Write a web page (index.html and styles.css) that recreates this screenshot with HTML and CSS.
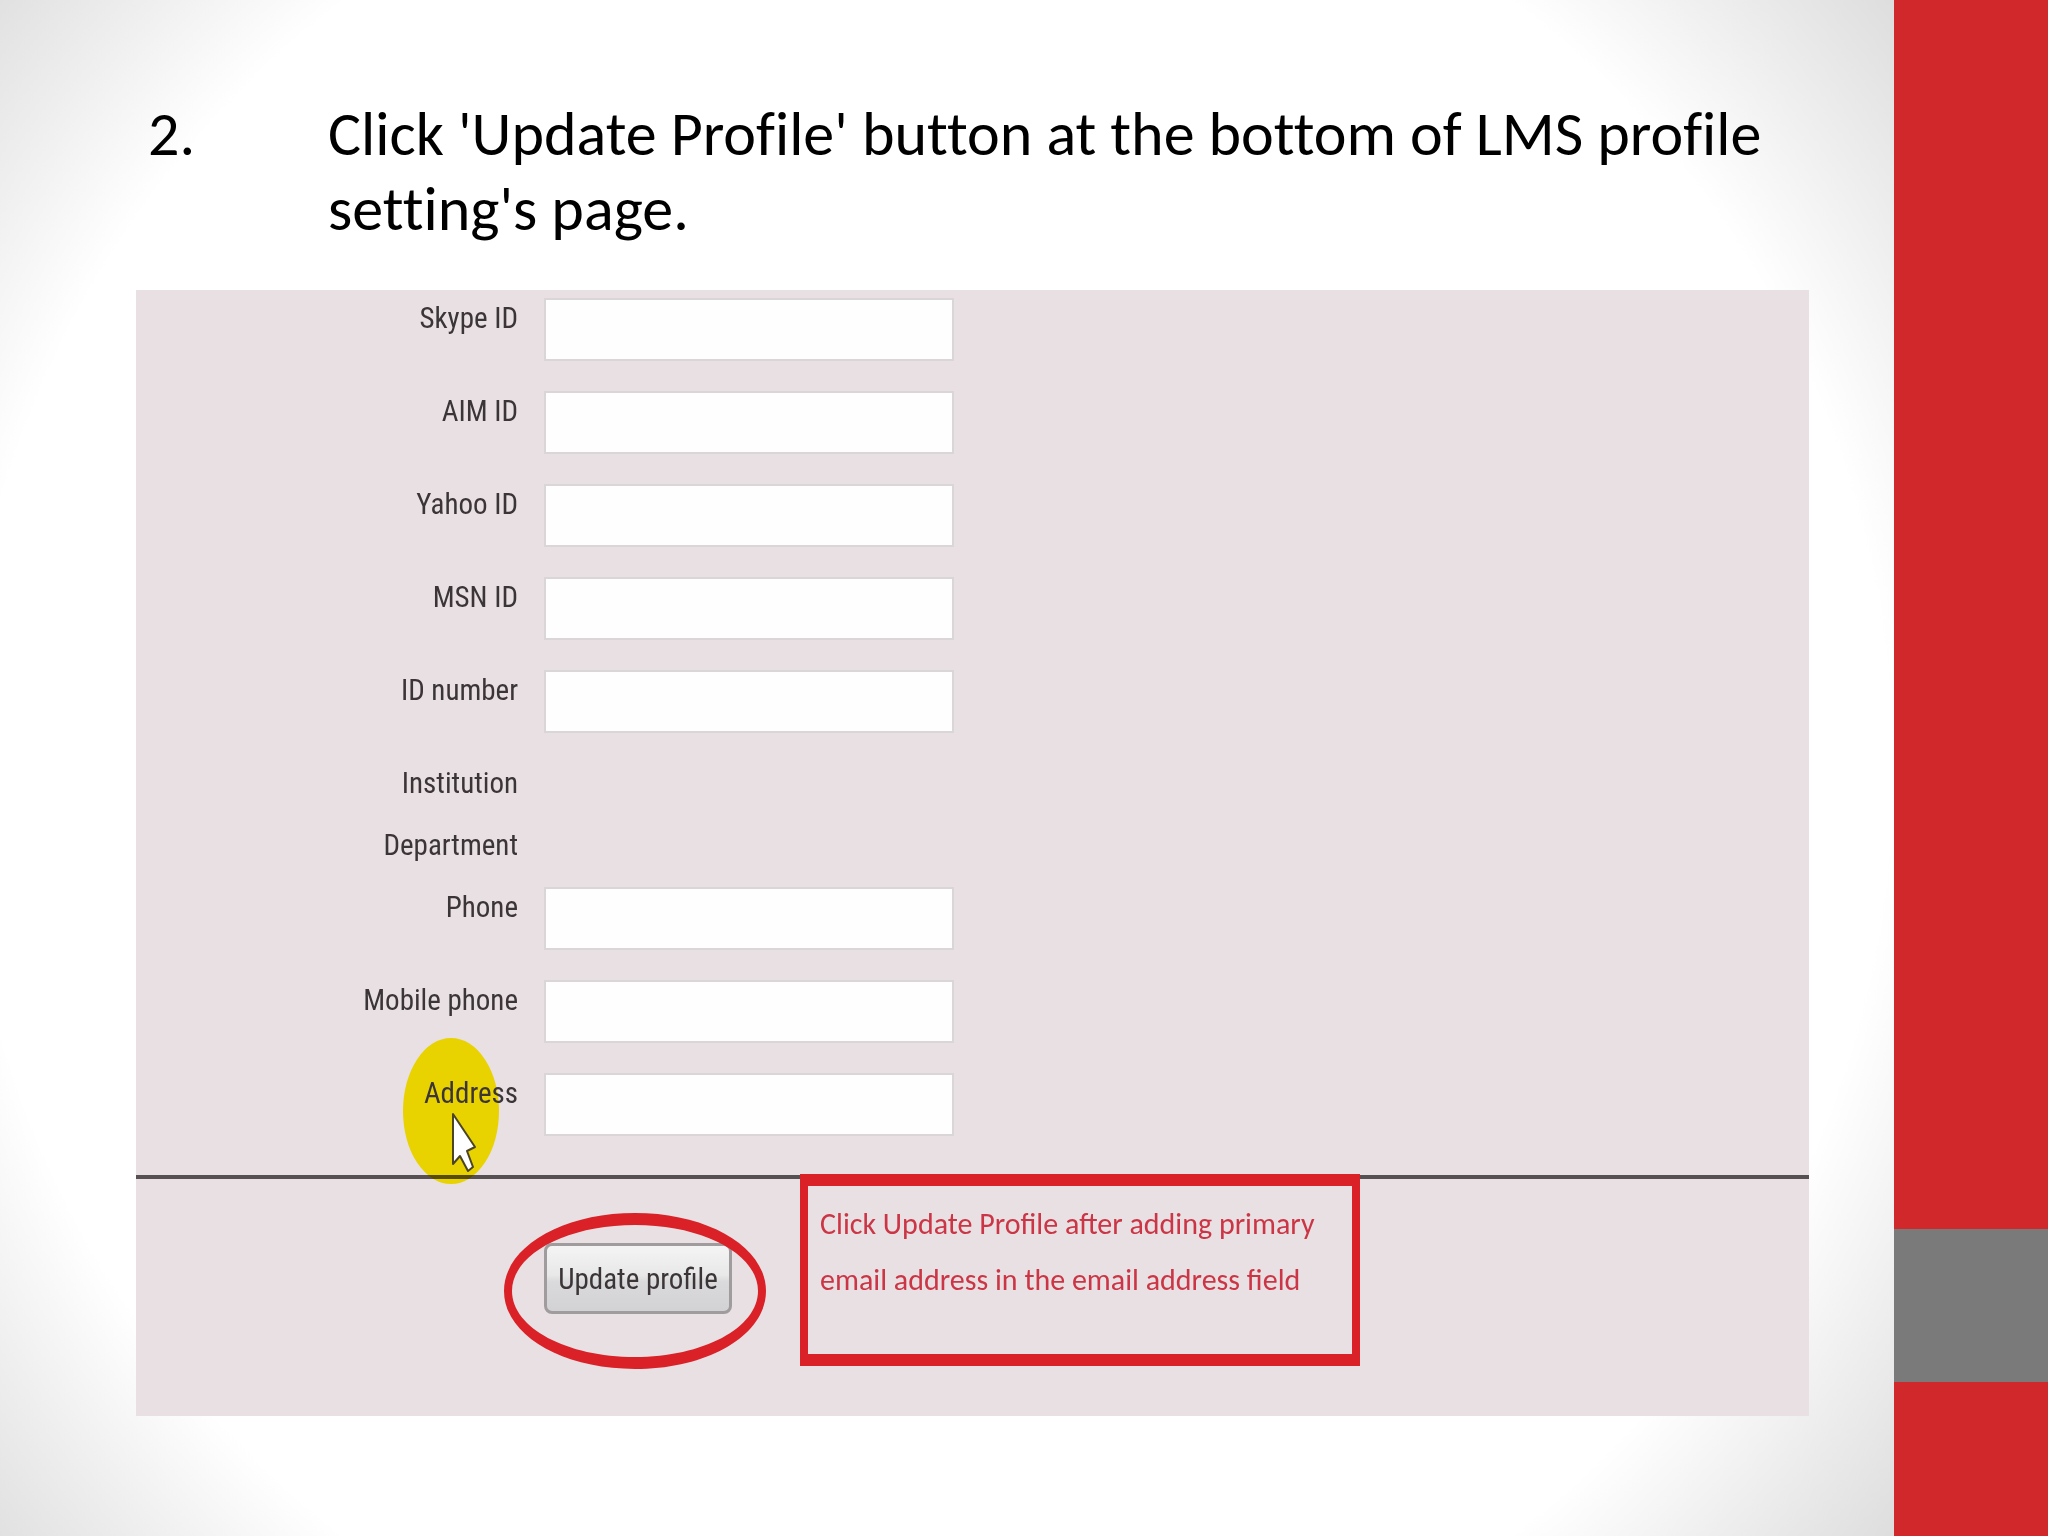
FILE: index.html
```html
<!DOCTYPE html>
<html lang="en">
<head>
<meta charset="utf-8">
<meta name="viewport" content="width=device-width, initial-scale=1">
<title>Update Profile</title>
<link rel="stylesheet" href="styles.css">
</head>
<body>
<div class="slide">
  <main class="content">
    <h1 class="step"><span class="step-number">2.</span><span class="step-text">Click 'Update Profile' button at the bottom of LMS profile setting's page.</span></h1>
    <form class="panel">
      <div class="fields">
        <div class="row"><label class="label" for="skype">Skype ID</label><input class="input" id="skype" type="text"></div>
        <div class="row"><label class="label" for="aim">AIM ID</label><input class="input" id="aim" type="text"></div>
        <div class="row"><label class="label" for="yahoo">Yahoo ID</label><input class="input" id="yahoo" type="text"></div>
        <div class="row"><label class="label" for="msn">MSN ID</label><input class="input" id="msn" type="text"></div>
        <div class="row"><label class="label" for="idnumber">ID number</label><input class="input" id="idnumber" type="text"></div>
        <div class="row row-plain"><span class="label">Institution</span></div>
        <div class="row row-plain"><span class="label">Department</span></div>
        <div class="row"><label class="label" for="phone">Phone</label><input class="input" id="phone" type="text"></div>
        <div class="row"><label class="label" for="mobile">Mobile phone</label><input class="input" id="mobile" type="text"></div>
        <div class="row">
          <label class="label label-marked" for="address">
            <svg class="highlight" viewBox="0 0 98 148" aria-hidden="true"><ellipse cx="49" cy="74" rx="48" ry="73" fill="#ffef00"/></svg>
            <span class="label-text">Address</span>
            <svg class="cursor" viewBox="0 0 28 62" aria-hidden="true"><path d="M2 3V53L9 45L17 60L22 56L16 40L24 36Z" fill="#fff" stroke="#4b4526" stroke-width="2" stroke-linejoin="round"/></svg>
          </label>
          <input class="input" id="address" type="text">
        </div>
      </div>
      <div class="actions">
        <div class="submit">
          <button class="button" type="button">Update profile</button>
          <svg class="ring" viewBox="0 0 262 156" aria-hidden="true"><path fill="#da2128" fill-rule="evenodd" d="M131 0C204 0 262 34 262 78S204 156 131 156S0 122 0 78S58 0 131 0ZM131 12C63 12 8 41 8 78S63 144 131 144S254 115 254 78S199 12 131 12Z"/></svg>
        </div>
        <p class="note">Click Update Profile after adding primary email address in the email address field</p>
      </div>
    </form>
  </main>
  <aside class="band"><div class="band-accent"></div></aside>
</div>
</body>
</html>
```
FILE: styles.css
```css
* {
  box-sizing: border-box;
}

body {
  margin: 0;
  background: #fff;
  font-family: "Roboto Condensed", "Liberation Sans", Arial, sans-serif;
}

.slide {
  display: flex;
  min-height: 100vh;
}

.content {
  flex: 1;
  min-width: 0;
  padding: 97px 85px 120px 136px;
  background: radial-gradient(circle farthest-corner at 49% 50%, #fff 78%, #eee 89%, #dcdcdc 101%);
}

.step {
  display: flex;
  margin: 0 0 43px;
  padding-left: 12px;
  color: #000;
  font: 400 62px/75px Carlito, Lato, sans-serif;
  font-variant-ligatures: none;
}

.step-number {
  flex: 0 0 180px;
}

.panel {
  padding-top: 8px;
  background: #e8e0e2;
}

.fields {
  padding-bottom: 9px;
  border-bottom: 4px solid #575052;
}

.row {
  display: flex;
  gap: 26px;
  height: 93px;
}

.row-plain {
  height: 62px;
}

.label {
  flex: 0 0 382px;
  color: #3b3537;
  font-size: 29px;
  line-height: 40px;
  text-align: right;
}

.label-marked {
  position: relative;
}

.label-text {
  position: relative;
}

.highlight {
  position: absolute;
  top: -36px;
  right: 18px;
  width: 98px;
  height: 148px;
  mix-blend-mode: multiply;
}

.cursor {
  position: absolute;
  top: 38px;
  right: 39px;
  width: 28px;
  height: 62px;
}

.input {
  width: 410px;
  height: 63px;
  padding: 8px 12px;
  border: 2px solid #dad6d8;
  background: #fefefe;
  font: inherit;
  font-size: 29px;
}

.actions {
  display: flex;
  align-items: flex-start;
  gap: 68px;
  height: 237px;
  padding-left: 408px;
}

.submit {
  position: relative;
  margin-top: 64px;
}

.button {
  display: block;
  width: 188px;
  height: 71px;
  padding: 0;
  border: 3px solid #a09c9e;
  border-radius: 8px;
  background: linear-gradient(#f4f4f4, #e8e8e9 45%, #dadadc 55%, #d2d2d4);
  color: #3b3537;
  font-family: inherit;
  font-size: 29px;
  white-space: nowrap;
}

.ring {
  position: absolute;
  top: -30px;
  left: -40px;
  width: 262px;
  height: 156px;
  pointer-events: none;
}

.note {
  width: 560px;
  height: 192px;
  margin: -5px 0 0;
  padding: 10px 12px;
  border: solid #da2128;
  border-width: 12px 8px;
  background: #e8e0e2;
  color: #cb3545;
  font: 400 30px/56px Carlito, Lato, sans-serif;
}

.band {
  display: flex;
  flex: 0 0 154px;
  flex-direction: column;
  padding-top: 1229px;
  background: #d0282b;
}

.band-accent {
  height: 153px;
  background: #7a7a7a;
}
```
